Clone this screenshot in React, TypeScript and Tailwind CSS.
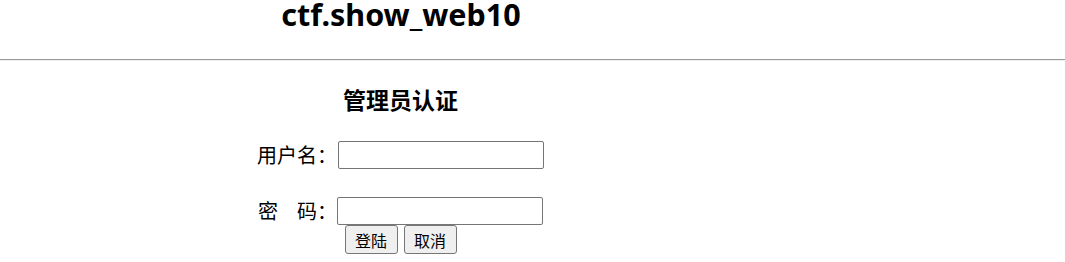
export default function App() {
  return (
    <div className="min-h-[262px] bg-white text-black font-['Noto_Sans','Noto_Sans_CJK_SC',sans-serif]">
      <div className="w-[802px] text-center">
        <h2 className="text-[30.5px] font-bold leading-[28px]">ctf.show_web10</h2>
      </div>
      <hr className="mt-[31px] border-0 border-t border-t-[#9a9a9a] border-b border-b-[#eeeeee]" />
      <div className="w-[801px] text-center">
        <h3 className="mt-[22px] text-[23px] font-bold leading-[32px] font-['Noto_Sans_CJK_SC',sans-serif]">
          管理员认证
        </h3>
        <div className="mt-[26px] flex items-center justify-center">
          <span className="w-[81px] text-left text-[20px] leading-[28px] font-['Noto_Sans_CJK_SC',sans-serif]">用户名：</span>
          <input className="h-[28px] w-[206px] rounded-[2px] border border-[#767676] bg-white px-[2px] text-[16px] outline-none" />
        </div>
        <div className="mt-[28px] flex items-center justify-center">
          <span className="flex w-[79px] text-[20px] leading-[28px] font-['Noto_Sans_CJK_SC',sans-serif]">
            <span className="w-[39px] text-left">密</span>
            <span>码：</span>
          </span>
          <input
            type="password"
            className="h-[28px] w-[206px] rounded-[2px] border border-[#767676] bg-white px-[2px] text-[16px] outline-none"
          />
        </div>
        <div className="flex justify-center gap-[6px]">
          <button className="h-[29px] w-[53px] rounded-[3px] border border-[#767676] bg-[#efefef] text-[16px] leading-[20px] font-['Noto_Sans_CJK_SC',sans-serif]">
            登陆
          </button>
          <button className="h-[29px] w-[53px] rounded-[3px] border border-[#767676] bg-[#efefef] text-[16px] leading-[20px] font-['Noto_Sans_CJK_SC',sans-serif]">
            取消
          </button>
        </div>
      </div>
    </div>
  );
}
